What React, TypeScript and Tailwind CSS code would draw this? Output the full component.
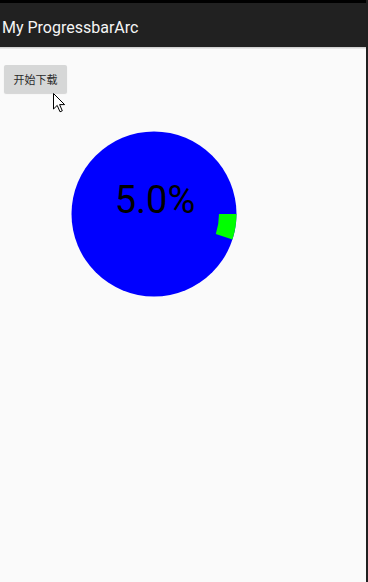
const App = () => {
  return (
    <div className="w-[368px] h-[582px] flex bg-[#202020] overflow-hidden">
      <div className="w-[366px] h-full flex flex-col bg-[#fafafa] relative">
        {/* status strip */}
        <div className="h-[3px] bg-black" />

        {/* app bar */}
        <div className="h-[44px] bg-[#212121] pl-[2px] pt-[15px]">
          <span className="block text-[16px] leading-[19px] text-[#f5f5f5] font-['Roboto',sans-serif]">
            My ProgressbarArc
          </span>
        </div>
        <div className="h-[2px] bg-gradient-to-b from-[#c8c8c8] to-[#f0f0f0]" />

        {/* content */}
        <div className="flex flex-col items-start">
          <button className="mt-[16px] ml-[4px] w-[63px] h-[28px] bg-[#d6d7d7] rounded-[2px] shadow-[0_1px_1px_rgba(0,0,0,0.15)] text-[11px] text-[#2a2a2a] font-['Noto_Sans_CJK_SC',sans-serif]">
            开始下载
          </button>

          <svg width="166" height="166" viewBox="0 0 166 166" className="mt-[38px] ml-[71px]">
            <circle cx="83" cy="83" r="82.5" fill="#0000ff" />
            <path
              d="M165.5 83 A82.5 82.5 0 0 1 161.46 108.49 L144.82 103.09 A65 65 0 0 0 148 83 Z"
              fill="#00ff00"
            />
            <text
              x="84"
              y="82"
              textAnchor="middle"
              fontSize="38"
              fontFamily="Roboto, sans-serif"
              fill="#000"
            >
              5.0%
            </text>
          </svg>
        </div>

        {/* mouse pointer */}
        <svg
          width="13"
          height="20"
          viewBox="0 0 13 20"
          className="absolute left-[53px] top-[93px]"
        >
          <path
            d="M0.5 0.5 L0.5 16 L4.2 12.4 L7 18.8 L9.3 17.8 L6.6 11.6 L11.6 11.6 Z"
            fill="#fff"
            stroke="#000"
            strokeWidth="1"
            strokeLinejoin="miter"
          />
        </svg>
      </div>
    </div>
  );
};

export default App;
